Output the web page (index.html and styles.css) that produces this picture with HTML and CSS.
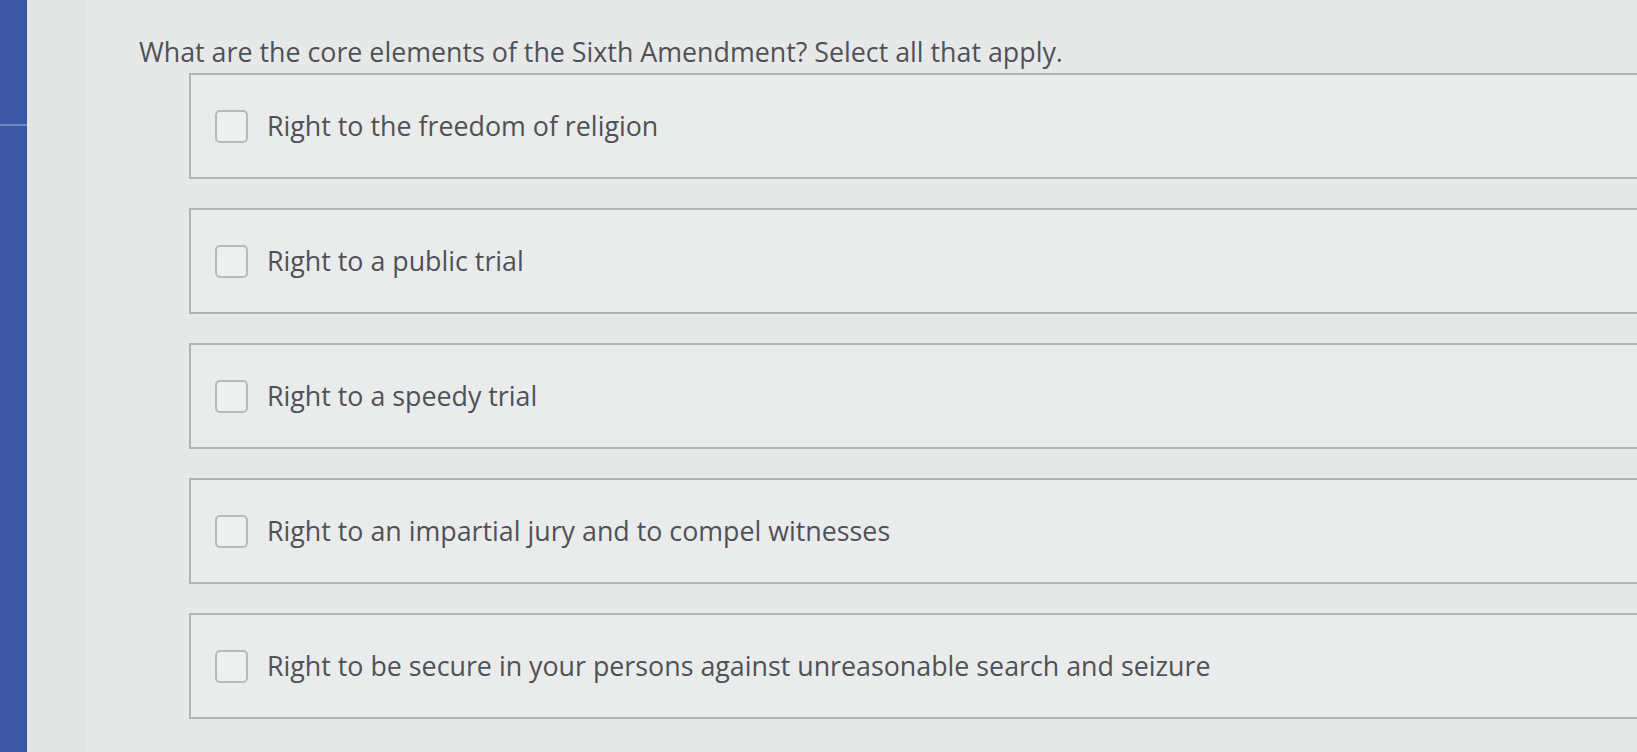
FILE: index.html
```html
<!DOCTYPE html>
<html lang="en">
<head>
<meta charset="utf-8">
<title>Sixth Amendment question</title>
<link rel="stylesheet" href="styles.css">
</head>
<body>
<div class="page">
  <aside class="rail"><div class="rail-line"></div></aside>
  <div class="gutter"></div>
  <main class="content">
    <h1 class="question">What are the core elements of the Sixth Amendment? Select all that apply.</h1>
    <ul class="options">
      <li class="option"><span class="box"></span><span class="label">Right to the freedom of religion</span></li>
      <li class="option"><span class="box"></span><span class="label">Right to a public trial</span></li>
      <li class="option"><span class="box"></span><span class="label">Right to a speedy trial</span></li>
      <li class="option"><span class="box"></span><span class="label">Right to an impartial jury and to compel witnesses</span></li>
      <li class="option"><span class="box"></span><span class="label">Right to be secure in your persons against unreasonable search and seizure</span></li>
    </ul>
  </main>
</div>
</body>
</html>
```
FILE: styles.css
```css
html, body {
  margin: 0;
  padding: 0;
  height: 100%;
  overflow: hidden;
}
body {
  background: #e7e9e9;
  font-family: "Open Sans", "Liberation Sans", sans-serif;
  color: #505157;
}
.page {
  display: flex;
  height: 752px;
}
.rail {
  width: 27px;
  flex: none;
  background: #3c58a4;
  padding-top: 124px;
  box-sizing: border-box;
}
.rail-line {
  height: 2px;
  background: #6f88c4;
}
.gutter {
  width: 58px;
  flex: none;
  background: #e3e4e4;
}
.content {
  flex: 1;
  padding: 37px 0 0 54px;
  min-width: 0;
}
.question {
  margin: 0;
  font-size: 26.8px;
  font-weight: 400;
  line-height: 30px;
  color: #505157;
  white-space: nowrap;
}
.options {
  list-style: none;
  margin: 6px 0 0 50px;
  padding: 0;
  display: flex;
  flex-direction: column;
  gap: 29px;
  width: 1500px;
}
.option {
  height: 106px;
  box-sizing: border-box;
  border: 2px solid #b2b3b5;
  background: #eaecec;
  display: flex;
  align-items: center;
  padding-left: 24px;
  gap: 19px;
}
.box {
  width: 33px;
  height: 33px;
  box-sizing: border-box;
  border: 2px solid #b8b9bb;
  border-radius: 5px;
  background: #eeefef;
  flex: none;
}
.label {
  font-size: 26.8px;
  line-height: 30px;
  color: #505157;
  white-space: nowrap;
}
```
